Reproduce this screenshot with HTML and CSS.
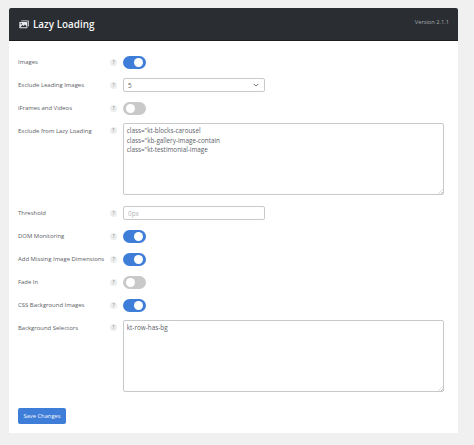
FILE: index.html
```html
<!DOCTYPE html>
<html lang="en">
<head>
<meta charset="utf-8">
<title>Lazy Loading</title>
<link rel="stylesheet" href="styles.css">
</head>
<body>
<main class="card">
  <header class="card-head">
    <h1 class="title">
      <svg class="title-icon" viewBox="0 0 12 11" aria-hidden="true">
        <path d="M3 0.6H11.2a.6.6 0 0 1 .6.6V7.2a.6.6 0 0 1-.6.6H10.8V2.2a.6.6 0 0 0-.6-.6H2.4V1.2A.6.6 0 0 1 3 .6Z" fill="#e8e9ea"/>
        <path d="M1 2.4H9.4a.7.7 0 0 1 .7.7V9.4a.7.7 0 0 1-.7.7H1a.7.7 0 0 1-.7-.7V3.1A.7.7 0 0 1 1 2.4Z" fill="#e8e9ea"/>
        <circle cx="2.6" cy="4.5" r=".9" fill="#2a2e33"/>
        <path d="M1.4 9 4.2 6.2 5.6 7.4 7.2 5.4 9.2 8V9Z" fill="#2a2e33"/>
      </svg>
      Lazy Loading
    </h1>
    <span class="version">Version 2.1.1</span>
  </header>
  <form class="form">
    <div class="row">
      <span class="label">Images</span><span class="help">?</span>
      <span class="toggle on"></span>
    </div>
    <div class="row">
      <span class="label">Exclude Leading Images</span><span class="help">?</span>
      <div class="field select">
        <span>5</span>
        <svg class="chevron" viewBox="0 0 8 5" aria-hidden="true"><path d="M1 1 4 4 7 1" fill="none" stroke="#50575e" stroke-width="1.1"/></svg>
      </div>
    </div>
    <div class="row">
      <span class="label">iFrames and Videos</span><span class="help">?</span>
      <span class="toggle"></span>
    </div>
    <div class="row row-top row-area">
      <span class="label">Exclude from Lazy Loading</span><span class="help">?</span>
      <div class="field area">
        <div>class="kt-blocks-carousel</div>
        <div>class="kb-gallery-image-contain</div>
        <div>class="kt-testimonial-image</div>
        <span class="grip"></span>
      </div>
    </div>
    <div class="row">
      <span class="label">Threshold</span><span class="help">?</span>
      <div class="field input"><span class="placeholder">0px</span></div>
    </div>
    <div class="row">
      <span class="label">DOM Monitoring</span><span class="help">?</span>
      <span class="toggle on"></span>
    </div>
    <div class="row">
      <span class="label">Add Missing Image Dimensions</span><span class="help">?</span>
      <span class="toggle on"></span>
    </div>
    <div class="row">
      <span class="label">Fade In</span><span class="help">?</span>
      <span class="toggle"></span>
    </div>
    <div class="row">
      <span class="label">CSS Background Images</span><span class="help">?</span>
      <span class="toggle on"></span>
    </div>
    <div class="row row-top row-area">
      <span class="label">Background Selectors</span><span class="help">?</span>
      <div class="field area">
        <div>kt-row-has-bg</div>
        <span class="grip"></span>
      </div>
    </div>
    <button class="save" type="button">Save Changes</button>
  </form>
</main>
</body>
</html>
```
FILE: styles.css
```css
* { box-sizing: border-box; }
html, body { height: 100%; }
body {
  margin: 0;
  padding: 8px 16px 0 9px;
  background: #f0f0f1;
  font-family: "Open Sans", "Liberation Sans", sans-serif;
  color: #3c434a;
  overflow: hidden;
}
.card {
  width: 449px;
  height: 425px;
  background: #fff;
}
.card-head {
  height: 33px;
  background: #2a2e33;
  border-bottom: 1px solid #1b1e21;
  border-radius: 2px 2px 0 0;
  padding: 0 9px 0 10px;
  display: flex;
  justify-content: space-between;
  color: #fff;
}
.title {
  margin: 0;
  padding-top: 9px;
  font-size: 9.9px;
  line-height: 15px;
  font-weight: 600;
  display: flex;
  align-items: flex-start;
  gap: 4px;
  color: #f4f5f5;
}
.title-icon { width: 10px; height: 9px; margin-top: 3px; }
.version {
  font-size: 5.7px;
  line-height: 9px;
  padding-top: 10px;
  color: #a7aaad;
}
.form { padding: 13px 14px 0 9px; }
.row {
  display: flex;
  align-items: center;
  min-height: 16px;
  margin-bottom: 7px;
}
.row-top { align-items: flex-start; }
.row-area { margin-bottom: 10px; }
.label {
  width: 92px;
  font-size: 5.95px;
  line-height: 9px;
  color: #5a6066;
  white-space: nowrap;
}
.help {
  width: 7px;
  height: 7px;
  margin-right: 6px;
  border-radius: 50%;
  background: #eceded;
  color: #85888c;
  font-size: 5px;
  line-height: 7px;
  text-align: center;
  flex: none;
}
.row-top .label, .row-top .help { margin-top: 4px; }
.toggle {
  position: relative;
  width: 23px;
  height: 13px;
  border-radius: 7px;
  background: #c9c9c9;
  flex: none;
}
.toggle::after {
  content: "";
  position: absolute;
  top: 2px;
  left: 3px;
  width: 9px;
  height: 9px;
  border-radius: 50%;
  background: #fff;
}
.toggle.on { background: #3f7ed8; }
.toggle.on::after { left: 11px; }
.field {
  border: 1px solid #c8c9cb;
  border-radius: 2px;
  background: #fff;
  font-size: 6.35px;
  color: #5a6066;
}
.select, .input {
  width: 142px;
  height: 14.5px;
  padding: 0 4px;
  display: flex;
  align-items: center;
  justify-content: space-between;
}
.chevron { width: 6px; height: 4px; margin-right: 1px; }
.placeholder { color: #b4b6b9; }
.area {
  position: relative;
  width: 322px;
  height: 72px;
  padding: 2px 3px;
  line-height: 9.5px;
}
.grip {
  position: absolute;
  right: 0;
  bottom: 0;
  width: 5px;
  height: 5px;
  background: repeating-linear-gradient(135deg, transparent 0 1px, #b9babc 1px 2px);
  clip-path: polygon(100% 0, 100% 100%, 0 100%);
}
.save {
  display: block;
  margin-top: 16px;
  width: 48px;
  height: 16px;
  padding: 0;
  border: 0;
  border-radius: 2px;
  background: #3f7ed8;
  color: #f2f6fc;
  font-family: inherit;
  font-size: 5.8px;
  font-weight: 500;
}
```
